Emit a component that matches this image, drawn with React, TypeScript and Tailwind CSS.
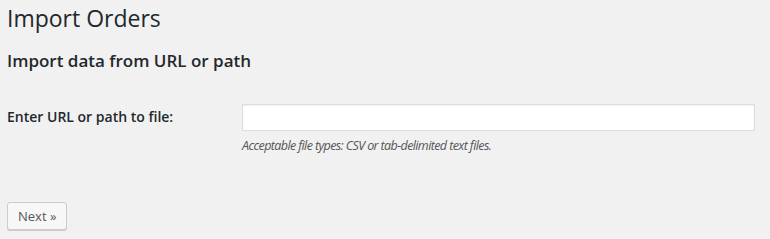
export default function App() {
  return (
    <div
      className="min-h-[239px] w-full bg-[#f1f1f1] pl-[7px] text-[#23282d]"
      style={{ fontFamily: '"Open Sans", "Liberation Sans", sans-serif' }}
    >
      <h1 className="pt-[3px] text-[23px] font-normal leading-[30px]">Import Orders</h1>
      <h2 className="mt-[17px] text-[17px] font-semibold leading-[22px]">Import data from URL or path</h2>

      <div className="mt-[32px] flex items-start">
        <label htmlFor="file_url" className="mt-[3px] w-[235px] text-[14px] font-semibold leading-[20px]">
          Enter URL or path to file:
        </label>
        <div>
          <input
            id="file_url"
            type="text"
            className="block h-[27px] w-[513px] border border-[#ddd] bg-white px-2 text-[14px] shadow-[inset_0_1px_2px_rgba(0,0,0,0.07)] outline-none"
          />
          <p className="mt-[6px] text-[12.5px] italic leading-[18px] tracking-[-0.6px] text-[#555]">
            Acceptable file types: CSV or tab-delimited text files.
          </p>
        </div>
      </div>

      <button className="mt-[47px] h-[28px] rounded-[3px] border border-[#ccc] bg-[#f7f7f7] px-[10px] text-[13px] leading-[26px] text-[#555] shadow-[0_1px_0_#ccc]">
        Next »
      </button>
    </div>
  )
}
